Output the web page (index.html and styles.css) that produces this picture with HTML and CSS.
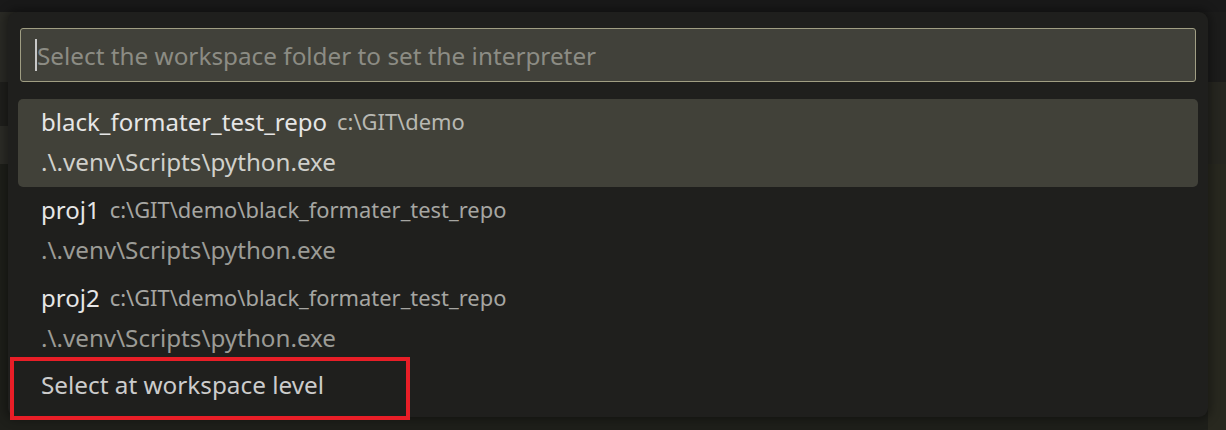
FILE: index.html
```html
<!DOCTYPE html>
<html lang="en">
<head>
<meta charset="utf-8">
<title>Select workspace folder</title>
<link rel="stylesheet" href="styles.css">
</head>
<body>
<div class="workbench">
  <div class="band band-top"></div>
  <div class="band band-title"><div class="side"></div><div class="main"></div></div>
  <div class="band band-tabs"><div class="side"></div><div class="main"></div></div>
  <div class="band band-crumbs"><div class="side"></div><div class="main"></div></div>
  <div class="band band-editor"><div class="side"></div><div class="main"></div></div>
</div>

<div class="quick-pick">
  <div class="input-box">
    <span class="caret"></span><span class="placeholder">Select the workspace folder to set the interpreter</span>
  </div>
  <div class="list">
    <div class="item selected">
      <div class="line1"><span class="label">black_formater_test_repo</span><span class="desc">c:\GIT\demo</span></div>
      <div class="line2">.\.venv\Scripts\python.exe</div>
    </div>
    <div class="item">
      <div class="line1"><span class="label">proj1</span><span class="desc">c:\GIT\demo\black_formater_test_repo</span></div>
      <div class="line2">.\.venv\Scripts\python.exe</div>
    </div>
    <div class="item">
      <div class="line1"><span class="label">proj2</span><span class="desc">c:\GIT\demo\black_formater_test_repo</span></div>
      <div class="line2">.\.venv\Scripts\python.exe</div>
    </div>
    <div class="item single">
      <div class="line1"><span class="label plain">Select at workspace level</span></div>
    </div>
  </div>
  <div class="highlight-box"></div>
</div>
</body>
</html>
```

FILE: styles.css
```css
* { box-sizing: border-box; }

html, body {
  margin: 0;
  padding: 0;
  width: 1226px;
  height: 430px;
  overflow: hidden;
  background: #23231f;
  font-family: "Noto Sans", "Open Sans", sans-serif;
}

.workbench {
  display: flex;
  flex-direction: column;
  height: 430px;
}

.band {
  display: flex;
  flex: none;
}

.band .side { width: 600px; }
.band .main { flex: 1; }

.band-top {
  height: 12px;
  background: #191919;
}

.band-title { height: 70px; }
.band-title .side { background: #2a2a25; }
.band-title .main { background: #1c1c1b; }

.band-tabs { height: 44px; }
.band-tabs .side { background: #1f1f1c; }
.band-tabs .main { background: #262620; }

.band-crumbs { height: 38px; }
.band-crumbs .side { background: #2c2c27; }
.band-crumbs .main { background: #262620; }

.band-editor { flex: 1; }
.band-editor .side { width: 1208px; background: #1e1f1a; }
.band-editor .main { background: #28281f; }

.quick-pick {
  position: absolute;
  left: 8px;
  top: 12px;
  width: 1200px;
  height: 405px;
  background: #1f1f1d;
  border-radius: 9px;
  box-shadow: 0 0 10px 3px rgba(0, 0, 0, 0.35);
  padding: 16px 10px 0 10px;
  display: flex;
  flex-direction: column;
}

.input-box {
  margin: 0 2px;
  height: 54px;
  background: #41413a;
  border: 1px solid #a09e83;
  border-radius: 3px;
  display: flex;
  align-items: center;
  padding-left: 14px;
  font-size: 24.3px;
  color: #8c8c84;
}

.caret {
  display: inline-block;
  width: 2px;
  height: 32px;
  background: #c8c8c8;
}

.list {
  margin-top: 17px;
  display: flex;
  flex-direction: column;
}

.item {
  height: 88px;
  padding: 2px 0 6px 23px;
  border-radius: 5px;
  display: flex;
  flex-direction: column;
}

.item.selected {
  background: #414139;
}

.item.single {
  height: 48px;
  padding-top: 1px;
}

.line1, .line2 {
  height: 40px;
  display: flex;
  align-items: center;
  white-space: nowrap;
}

.label {
  font-size: 24px;
  color: #e6e6e6;
}

.label.plain {
  color: #cccccc;
  font-size: 24.3px;
}

.desc {
  font-size: 21.9px;
  color: #a6a6a2;
  margin-left: 10px;
}

.selected .desc {
  color: #b8b8b2;
}

.line2 {
  font-size: 24.2px;
  color: #9b9b96;
}

.selected .line2 {
  color: #d0d0cb;
}

.highlight-box {
  position: absolute;
  left: 2px;
  top: 345px;
  width: 400px;
  height: 63px;
  border: 4px solid #e81e27;
}
```
